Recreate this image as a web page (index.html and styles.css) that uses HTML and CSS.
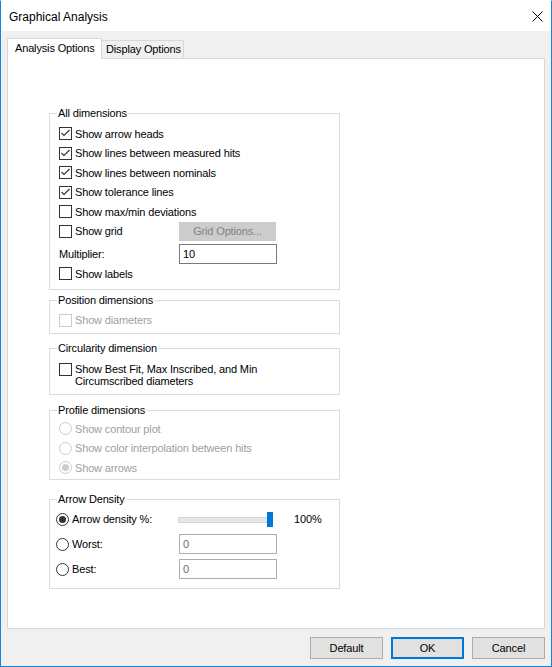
FILE: index.html
```html
<!DOCTYPE html>
<html lang="en">
<head>
<meta charset="utf-8">
<title>Graphical Analysis</title>
<link rel="stylesheet" href="styles.css">
</head>
<body>
<div class="window">
  <div class="titlebar">
    <span class="title">Graphical Analysis</span>
    <span class="close">
      <svg width="11" height="11" viewBox="0 0 11 11"><path d="M0.5 0.5L10.5 10.5M10.5 0.5L0.5 10.5" stroke="#000" stroke-width="1" fill="none"/></svg>
    </span>
  </div>

  <div class="client">
    <div class="tabs">
      <div class="tab active">Analysis Options</div>
      <div class="tab">Display Options</div>
    </div>

    <div class="page">
      <!-- All dimensions -->
      <div class="group g-all">
        <div class="group-title">All dimensions</div>
        <div class="rows">
          <div class="check row"><span class="box"><svg width="11" height="11" viewBox="0 0 11 11"><polyline points="1.5,5 4,7.5 9.5,2" class="tick"/></svg></span>Show arrow heads</div>
          <div class="check row"><span class="box"><svg width="11" height="11" viewBox="0 0 11 11"><polyline points="1.5,5 4,7.5 9.5,2" class="tick"/></svg></span>Show lines between measured hits</div>
          <div class="check row"><span class="box"><svg width="11" height="11" viewBox="0 0 11 11"><polyline points="1.5,5 4,7.5 9.5,2" class="tick"/></svg></span>Show lines between nominals</div>
          <div class="check row"><span class="box"><svg width="11" height="11" viewBox="0 0 11 11"><polyline points="1.5,5 4,7.5 9.5,2" class="tick"/></svg></span>Show tolerance lines</div>
          <div class="check row"><span class="box"></span>Show max/min deviations</div>
          <div class="field row">
            <div class="check"><span class="box"></span>Show grid</div>
            <div class="btn-disabled">Grid Options...</div>
          </div>
          <div class="field multiplier">
            <span>Multiplier:</span>
            <div class="input">10</div>
          </div>
          <div class="check row"><span class="box"></span>Show labels</div>
        </div>
      </div>

      <!-- Position dimensions -->
      <div class="group g-pos">
        <div class="group-title">Position dimensions</div>
        <div class="rows">
          <div class="check row disabled"><span class="box"></span>Show diameters</div>
        </div>
      </div>

      <!-- Circularity dimension -->
      <div class="group g-circ">
        <div class="group-title">Circularity dimension</div>
        <div class="rows">
          <div class="check multi"><span class="box"></span><span>Show Best Fit, Max Inscribed, and Min<br>Circumscribed diameters</span></div>
        </div>
      </div>

      <!-- Profile dimensions -->
      <div class="group g-prof">
        <div class="group-title">Profile dimensions</div>
        <div class="rows">
          <div class="check row disabled"><span class="radio"></span>Show contour plot</div>
          <div class="check row disabled"><span class="radio"></span>Show color interpolation between hits</div>
          <div class="check row disabled"><span class="radio on"></span>Show arrows</div>
        </div>
      </div>

      <!-- Arrow density -->
      <div class="group g-density">
        <div class="group-title">Arrow Density</div>
        <div class="rows">
          <div class="dfield">
            <div class="check"><span class="radio on"></span>Arrow density %:</div>
            <div class="slider"><span class="thumb"></span></div>
            <span class="pct">100%</span>
          </div>
          <div class="dfield">
            <div class="check"><span class="radio"></span>Worst:</div>
            <div class="input dim">0</div>
          </div>
          <div class="dfield">
            <div class="check"><span class="radio"></span>Best:</div>
            <div class="input dim">0</div>
          </div>
        </div>
      </div>
    </div>

    <div class="buttons">
      <div class="btn">Default</div>
      <div class="btn default">OK</div>
      <div class="btn">Cancel</div>
    </div>
  </div>
</div>
</body>
</html>
```

FILE: styles.css
```css
* {
  box-sizing: border-box;
}

html,
body {
  margin: 0;
  padding: 0;
}

body {
  width: 552px;
  height: 667px;
  overflow: hidden;
  background: #fff;
  color: #000;
  font-family: "Segoe UI", "Liberation Sans", Arial, sans-serif;
  font-size: 11px;
  letter-spacing: -0.15px;
}

/* ---------- window frame ---------- */
.window {
  width: 552px;
  height: 667px;
  border: 1px solid #1883d7;
  border-top-color: #fff;
  display: flex;
  flex-direction: column;
}

.titlebar {
  flex: none;
  height: 30px;
  background: #fff;
  display: flex;
  align-items: center;
  justify-content: space-between;
  padding-left: 8px;
}

.title {
  font-size: 12px;
  letter-spacing: 0;
  line-height: 14px;
  padding-top: 1px;
}

.close {
  width: 28px;
  height: 30px;
  display: flex;
  align-items: center;
  justify-content: center;
}

.client {
  flex: 1;
  background: #f0f0f0;
  padding: 7px 6px 7px 6px;
  display: flex;
  flex-direction: column;
}

/* ---------- tabs ---------- */
.tabs {
  display: flex;
  align-items: flex-end;
  height: 20px;
  flex: none;
}

.tab {
  width: 83px;
  height: 18px;
  margin-left: -1px;
  padding-left: 4px;
  border: 1px solid #d9d9d9;
  border-bottom: none;
  background: #f0f0f0;
  line-height: 17px;
  white-space: nowrap;
}

.tab.active {
  position: relative;
  z-index: 1;
  width: 95px;
  height: 21px;
  margin-left: 0;
  margin-bottom: -1px;
  padding-left: 7px;
  background: #fff;
  line-height: 19px;
}

.page {
  flex: none;
  height: 571px;
  border: 1px solid #d9d9d9;
  background: #fff;
  padding-top: 54px;
}

/* ---------- group boxes ---------- */
.group {
  margin-left: 41px;
  width: 291px;
  border: 1px solid #dcdcdc;
}

.group-title {
  width: fit-content;
  margin: -7px 0 0 7px;
  padding: 0 1px;
  background: #fff;
  line-height: 13px;
  height: 13px;
  white-space: nowrap;
}

.g-all {
  height: 177px;
}
.g-all .rows {
  padding: 4px 0 0 9px;
}

.g-pos {
  height: 34px;
  margin-top: 10px;
}
.g-pos .rows {
  padding: 3px 0 0 9px;
}
.g-pos .row {
  height: 20px;
}

.g-circ {
  height: 47px;
  margin-top: 14px;
}
.g-circ .rows {
  padding: 8px 0 0 9px;
}

.g-prof {
  height: 70px;
  margin-top: 15px;
}
.g-prof .rows {
  padding: 2px 0 0 9px;
}

.g-density {
  height: 90px;
  margin-top: 19px;
}
.g-density .rows {
  padding: 0.5px 0 0 6px;
}

/* ---------- check boxes & radios ---------- */
.check {
  display: flex;
  align-items: center;
  white-space: nowrap;
}

.row {
  height: 19.5px;
}

.box,
.radio {
  flex: none;
  width: 13px;
  height: 13px;
  margin-right: 3px;
  border: 1px solid #333;
  background: #fff;
  display: flex;
  align-items: center;
  justify-content: center;
}

.radio {
  border-radius: 50%;
}

.radio.on::after {
  content: "";
  width: 7px;
  height: 7px;
  border-radius: 50%;
  background: #333;
}

.tick {
  fill: none;
  stroke: #333;
  stroke-width: 1.15;
}

.disabled {
  color: #a0a0a0;
}
.disabled .box,
.disabled .radio {
  border-color: #cccccc;
}
.disabled .radio.on::after {
  background: #cccccc;
}

.check.multi {
  align-items: flex-start;
  line-height: 12px;
}

/* ---------- field rows ---------- */
.field {
  display: grid;
  grid-template-columns: 120px 98px;
  align-items: center;
}

.multiplier {
  height: 20px;
  margin-top: 3px;
}

.btn-disabled {
  width: 97px;
  height: 19px;
  background: #cccccc;
  color: #838383;
  display: flex;
  align-items: center;
  justify-content: center;
}

.input {
  width: 98px;
  height: 20px;
  border: 1px solid #7a7a7a;
  padding-left: 3px;
  line-height: 18px;
  background: #fff;
}

.input.dim {
  border-color: #adadad;
  color: #6d6d6d;
  margin-left: 1px;
}

.dfield {
  display: grid;
  grid-template-columns: 122px 95px auto;
  align-items: center;
  height: 25px;
}

.slider {
  position: relative;
  width: 95px;
  height: 15px;
  display: flex;
  justify-content: flex-end;
  align-items: stretch;
}

.slider::before {
  content: "";
  position: absolute;
  left: 0;
  right: 0;
  top: 5px;
  height: 4px;
  background: #e7e7e7;
  border: 1px solid #d6d6d6;
}

.thumb {
  position: relative;
  width: 6px;
  background: #0078d7;
}

.pct {
  padding-left: 21px;
}

/* ---------- dialog buttons ---------- */
.buttons {
  flex: none;
  display: flex;
  justify-content: flex-end;
  gap: 8px;
  margin-top: 8px;
}

.btn {
  width: 73px;
  height: 22px;
  border: 1px solid #adadad;
  background: #e1e1e1;
  display: flex;
  align-items: center;
  justify-content: center;
}

.btn.default {
  border: 2px solid #0078d7;
}
```
